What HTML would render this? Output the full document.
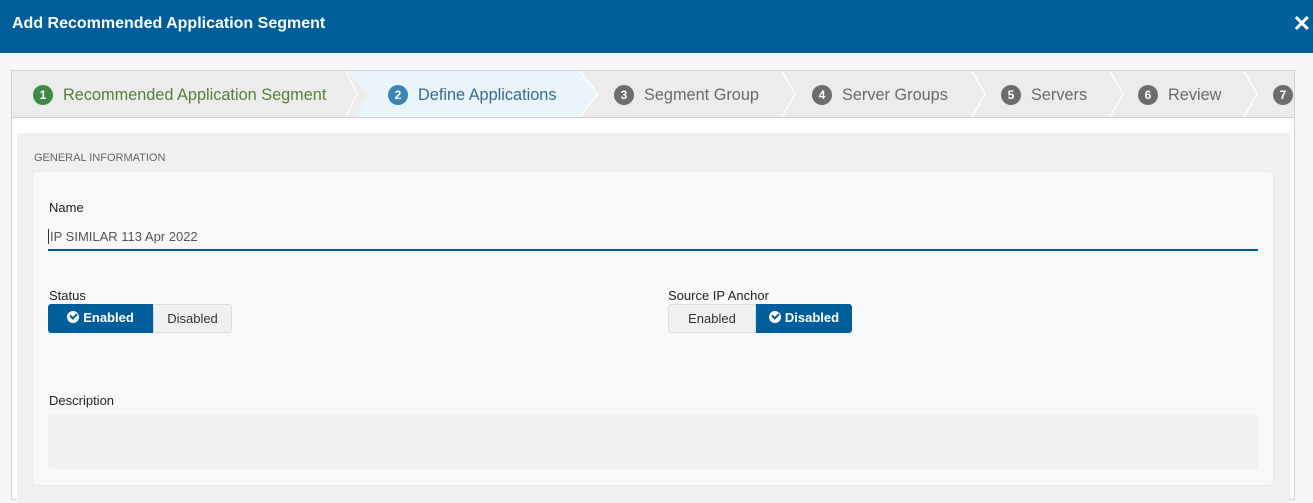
<!DOCTYPE html>
<html><head><style>
*{box-sizing:border-box;margin:0;padding:0}
body{width:1313px;height:491px;overflow:hidden;background:#f6f7f9;font-family:"Liberation Sans",Arial,sans-serif;position:relative}
.hdr{position:absolute;left:0;top:0;width:1313px;height:53px;background:#005f9a;color:#fff;font-weight:bold;font-size:16px;line-height:48px;padding-left:12px}
.x{position:absolute;right:2px;top:0;font-size:22px;color:#fff;font-weight:bold;line-height:48px}
.panel{position:absolute;left:11px;top:70px;width:1284px;height:430px;background:#fff;border:1px solid #d4d4d4}
.tabs{position:absolute;left:0;top:0;width:1282px;height:47px;background:#ececec;border-bottom:1px solid #d0d0d0}
.t{position:absolute;top:1px;height:46px;line-height:46px;font-size:16.3px;color:#6b6b6b;white-space:nowrap}
.c{display:inline-block;width:20px;height:20px;border-radius:50%;background:#6d6d6d;color:#fff;font-size:12px;font-weight:bold;text-align:center;line-height:20px;vertical-align:1px;margin-right:10px}
.gray{position:absolute;left:5px;top:62px;width:1273px;height:370px;background:#f0f0f0}
.gi{position:absolute;left:17px;top:19px;font-size:11px;color:#666}
.card{position:absolute;left:16px;top:39px;width:1240px;height:313px;background:#f7f8fa;border-radius:4px;box-shadow:0 0 3px rgba(0,0,0,.06)}
.lbl{position:absolute;font-size:13px;color:#222}
.btn{position:absolute;top:0;height:29px;line-height:28px;font-size:13px;text-align:center}
.on{background:#005f9a;color:#fff;font-weight:bold}
.off{background:#eff0f2;color:#333;border:1px solid #ddd}
.ck{display:inline-block;width:12px;height:12px;border-radius:50%;background:#fff;vertical-align:-1px;margin-right:4px;position:relative}
.ck:after{content:"";position:absolute;left:3px;top:2px;width:5px;height:3px;border-left:2px solid #005f9a;border-bottom:2px solid #005f9a;transform:rotate(-45deg)}
</style></head><body>
<div class="hdr">Add Recommended Application Segment<span class="x">✕</span></div>
<div class="panel">
 <div class="tabs">
  <svg width="1282" height="46" style="position:absolute;left:0;top:0">
   <polygon points="334,0 568,0 586,23 568,46 344,46 356,23" fill="#eaf4fb"/>
   <g fill="none" stroke="#fff" stroke-width="1.3">
    <polyline points="334,0 345,23 334,46"/>
    <polyline points="568,0 586,23 568,46"/>
    <polyline points="770,0 783,23 770,46"/>
    <polyline points="960,0 973,23 960,46"/>
    <polyline points="1098,0 1111,23 1098,46"/>
    <polyline points="1232,0 1245,23 1232,46"/>
   </g>
  </svg>
  <div class="t" style="left:21px;color:#5a7e3c"><span class="c" style="background:#3f8a46">1</span>Recommended Application Segment</div>
  <div class="t" style="left:376px;color:#3b6a90"><span class="c" style="background:#3a87b3">2</span>Define Applications</div>
  <div class="t" style="left:602px"><span class="c">3</span>Segment Group</div>
  <div class="t" style="left:800px"><span class="c">4</span>Server Groups</div>
  <div class="t" style="left:989px"><span class="c">5</span>Servers</div>
  <div class="t" style="left:1126px"><span class="c">6</span>Review</div>
  <div class="t" style="left:1261px"><span class="c">7</span></div>
 </div>
 <div class="gray">
  <div class="gi">GENERAL INFORMATION</div>
  <div class="card">
   <div class="lbl" style="left:16px;top:28px">Name</div>
   <div style="position:absolute;left:15px;top:57px;font-size:13px;color:#555;border-left:1px solid #333;padding-left:1px;line-height:15px">IP SIMILAR 113 Apr 2022</div>
   <div style="position:absolute;left:15px;top:77px;width:1210px;height:2px;background:#005f9a"></div>
   <div class="lbl" style="left:16px;top:116px">Status</div>
   <div style="position:absolute;left:15px;top:132px;width:185px;height:29px">
    <div class="btn on" style="left:0;width:105px;border-radius:3px 0 0 3px"><span class="ck"></span>Enabled</div>
    <div class="btn off" style="left:105px;width:79px;border-radius:0 3px 3px 0">Disabled</div>
   </div>
   <div class="lbl" style="left:635px;top:116px">Source IP Anchor</div>
   <div style="position:absolute;left:635px;top:132px;width:185px;height:29px">
    <div class="btn off" style="left:0;width:88px;border-radius:3px 0 0 3px">Enabled</div>
    <div class="btn on" style="left:88px;width:96px;border-radius:0 3px 3px 0"><span class="ck"></span>Disabled</div>
   </div>
   <div class="lbl" style="left:16px;top:221px">Description</div>
   <div style="position:absolute;left:15px;top:242px;width:1210px;height:55px;background:#eff0f2;border-radius:4px"></div>
  </div>
 </div>
</div>
</body></html>
